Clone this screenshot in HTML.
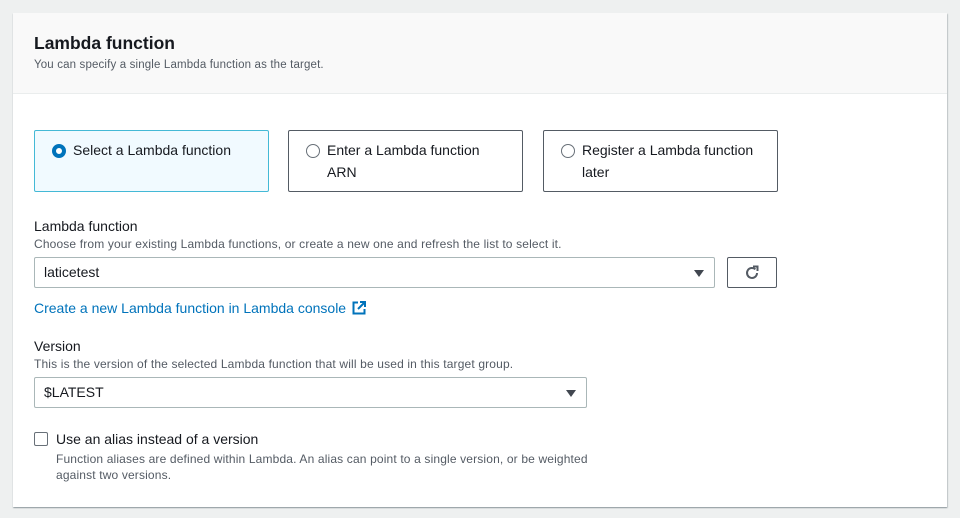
<!DOCTYPE html>
<html><head><style>
*{box-sizing:border-box;margin:0;padding:0}
body{width:960px;height:518px;background:#eef0f0;font-family:"Liberation Sans",sans-serif;color:#16191f;position:relative;overflow:hidden}
.card{position:absolute;left:13px;top:13px;width:934px;height:494px;background:#fff;box-shadow:0 1px 1px rgba(0,28,36,.3),1px 1px 1px rgba(0,28,36,.15)}
.hd{height:81px;background:#f9f9f9;border-bottom:1px solid #eaeded}
.a{position:absolute}
.t{font-size:17.5px;font-weight:bold}
.s{font-size:12px;letter-spacing:0.15px;color:#545b64}
.m{font-size:14px}
.tile{position:absolute;top:130px;width:235px;height:62px;border:1px solid #545b64;border-radius:2px;background:#fff}
.tile.sel{border-color:#44b9d6;background:#f1faff}
.rad{position:absolute;left:17px;top:13px;width:14px;height:14px;border-radius:50%;border:1.5px solid #687078;background:#fff}
.rad.on{border:4px solid #0073bb}
.tile span{position:absolute;left:38px;top:8px;font-size:14px;line-height:22px}
.inp{position:absolute;height:31px;border:1px solid #aab7b8;border-radius:2px;background:#fff}
.arr{position:absolute;right:10px;top:12px;width:0;height:0;border-left:5.5px solid transparent;border-right:5.5px solid transparent;border-top:7px solid #414750}
</style></head><body>
<div class="card"><div class="hd"></div></div>
<div class="a t" style="left:34px;top:33px">Lambda function</div>
<div class="a s" style="left:34px;top:59px;font-size:11.5px">You can specify a single Lambda function as the target.</div>

<div class="tile sel" style="left:34px"><div class="rad on"></div><span>Select a Lambda function</span></div>
<div class="tile" style="left:288px"><div class="rad"></div><span>Enter a Lambda function<br>ARN</span></div>
<div class="tile" style="left:543px"><div class="rad"></div><span>Register a Lambda function<br>later</span></div>

<div class="a m" style="left:34px;top:218px">Lambda function</div>
<div class="a s" style="left:34px;top:237px">Choose from your existing Lambda functions, or create a new one and refresh the list to select it.</div>
<div class="inp" style="left:34px;top:257px;width:681px"><span class="a m" style="left:9px;top:6px">laticetest</span><div class="arr"></div></div>
<div class="inp" style="left:727px;top:257px;width:50px;border-color:#545b64">
<svg class="a" style="left:16px;top:7px" width="16" height="16" viewBox="0 0 16 16"><path d="M13 8a5 5 0 1 1-1.6-3.7" fill="none" stroke="#545b64" stroke-width="2"/><path d="M9 1.5h4.5V6" fill="none" stroke="#545b64" stroke-width="2"/></svg></div>

<div class="a m" style="left:34px;top:300px;color:#0073bb">Create a new Lambda function in Lambda console
<svg style="vertical-align:-2px;margin-left:2px" width="14" height="14" viewBox="0 0 14 14"><path d="M6 1.5H1.5v11h11V8" fill="none" stroke="#0073bb" stroke-width="2"/><path d="M8 1h5v5M13 1L6 8" fill="none" stroke="#0073bb" stroke-width="2"/></svg></div>

<div class="a m" style="left:34px;top:338px">Version</div>
<div class="a s" style="left:34px;top:357px">This is the version of the selected Lambda function that will be used in this target group.</div>
<div class="inp" style="left:34px;top:377px;width:553px"><span class="a m" style="left:9px;top:6px">$LATEST</span><div class="arr"></div></div>

<div class="a" style="left:34px;top:432px;width:14px;height:14px;border:1.5px solid #687078;border-radius:2px"></div>
<div class="a m" style="left:56px;top:431px">Use an alias instead of a version</div>
<div class="a s" style="left:56px;top:451px;line-height:16px">Function aliases are defined within Lambda. An alias can point to a single version, or be weighted<br>against two versions.</div>
</body></html>
